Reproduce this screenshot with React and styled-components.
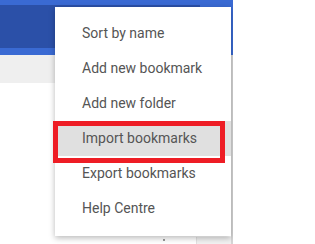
import React from 'react'
import styled, { createGlobalStyle } from 'styled-components'

const GlobalStyle = createGlobalStyle`
    html, body {
        margin: 0;
        background: #fff;
        font-family: Roboto, "Liberation Sans", Arial, sans-serif;
    }
`;

const Page = styled.div`
    position: relative;
    width: 233px;
    height: 244px;
    display: flex;
    flex-direction: column;
    overflow: hidden;
`;

const Header = styled.header`
    height: 55px;
    box-sizing: border-box;
    padding: 5px 0 7px;
    background-color: #3a6ad3;
    display: flex;
`;

const SearchArea = styled.div`
    width: 200px;
    background-color: #2b50a8;
`;

const Body = styled.div`
    flex: 1;
    display: flex;
`;

const Main = styled.main`
    flex: 1;
    display: flex;
    flex-direction: column;
`;

const Toolbar = styled.div`
    height: 28px;
    background-color: #efefef;
`;

const Footer = styled.div`
    margin-top: auto;
    height: 7px;
    display: flex;
    align-items: flex-end;
`;

const Dot = styled.span`
    width: 2px;
    height: 2px;
    border-radius: 1px;
    background-color: #777;
    margin: 0 0 3px 163px;
`;

const Panel = styled.div`
    margin-left: auto;
    width: 34px;
    height: 7px;
    background-color: #f1f1f1;
    border-left: 1px solid #e2e2e2;
`;

const Scrollbar = styled.div`
    width: 2px;
    background-color: #d6d6d6;
`;

const Menu = styled.ul`
    position: absolute;
    top: 7px;
    left: 55px;
    width: 176px;
    margin: 0;
    padding: 9px 0 10px;
    list-style: none;
    background-color: #fff;
    box-shadow: 0 2px 6px rgba(0, 0, 0, 0.28);
`;

const Item = styled.li`
    height: 35px;
    line-height: 35px;
    padding-left: 27px;
    font-size: 14px;
    color: #555;
    white-space: nowrap;
    background-color: ${p => (p.$active ? '#e0e0e0' : 'transparent')};
`;

const Highlight = styled.div`
    position: absolute;
    left: 53px;
    top: 121px;
    width: 172px;
    height: 42px;
    box-sizing: border-box;
    border: 5px solid #ee1d25;
`;

const items = [
    'Sort by name',
    'Add new bookmark',
    'Add new folder',
    'Import bookmarks',
    'Export bookmarks',
    'Help Centre',
];

export default function App() {
    return (
        <>
            <GlobalStyle />
            <Page>
                <Header>
                    <SearchArea />
                </Header>
                <Body>
                    <Main>
                        <Toolbar />
                        <Footer>
                            <Dot />
                            <Panel />
                        </Footer>
                    </Main>
                    <Scrollbar />
                </Body>
                <Menu>
                    {items.map((label, idx) => (
                        <Item key={idx} $active={idx === 3}>{label}</Item>
                    ))}
                </Menu>
                <Highlight />
            </Page>
        </>
    )
}
